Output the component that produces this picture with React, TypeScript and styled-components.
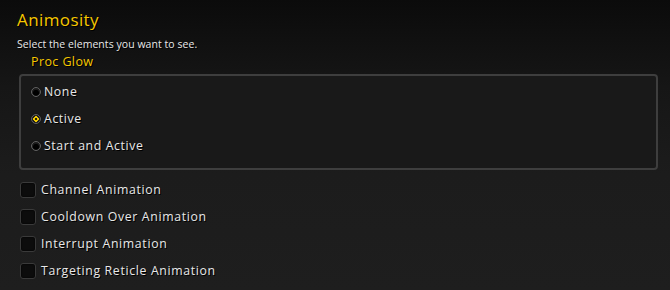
import styled, { createGlobalStyle } from "styled-components";

const GlobalStyle = createGlobalStyle`
  html, body {
    margin: 0;
    padding: 0;
    background: #1d1d1d;
  }
  #root {
    width: 670px;
    height: 290px;
  }
`;

const Page = styled.div`
  width: 670px;
  height: 290px;
  box-sizing: border-box;
  padding: 8px 12px 0 17px;
  background: linear-gradient(180deg, #0b0b0b 0%, #161616 30%, #1c1c1c 60%, #1e1e1e 100%);
  font-family: "Open Sans", "DejaVu Sans", sans-serif;
  color: #e8e8e8;
  text-shadow: 1px 1px 0 #000;
  overflow: hidden;
`;

const Title = styled.h1`
  margin: 0;
  font-size: 17px;
  font-weight: 400;
  letter-spacing: 0.4px;
  line-height: 24px;
  color: #f6c700;
`;

const Description = styled.div`
  margin-top: 5px;
  font-size: 10.5px;
  letter-spacing: 0.05px;
  line-height: 14px;
`;

const GroupLabel = styled.div`
  margin: 2px 0 0 14px;
  font-size: 12.5px;
  letter-spacing: 0.4px;
  line-height: 18px;
  color: #f6c700;
`;

const Group = styled.div`
  margin: 3px 0 0 2px;
  width: 639px;
  height: 96px;
  box-sizing: border-box;
  padding: 2px 0 0 10px;
  border: 2px solid #3e3e3e;
  border-radius: 4px;
  background: #191919;
  display: flex;
  flex-direction: column;
`;

const OptionRow = styled.label`
  height: 27px;
  display: flex;
  align-items: center;
  gap: 3px;
  font-size: 12.3px;
  letter-spacing: 0.6px;
`;

const Radio = styled.span<{ $checked?: boolean }>`
  width: 10px;
  height: 10px;
  box-sizing: border-box;
  border-radius: 50%;
  border: 1.5px solid #626262;
  background: ${(p) =>
    p.$checked
      ? "radial-gradient(circle, #2a2400 0 1.2px, #f0c800 1.3px 2.6px, #1e1e1e 2.7px)"
      : "radial-gradient(circle at 50% 60%, #000 0 2.6px, #1a1a1a 3.2px)"};
  box-shadow: 0 0 1px #000;
`;

const Checks = styled.div`
  margin-top: 6px;
  display: flex;
  flex-direction: column;
`;

const CheckRow = styled.label`
  height: 27px;
  display: flex;
  align-items: center;
  gap: 5px;
  padding-left: 3px;
  font-size: 12.3px;
  letter-spacing: 0.65px;
`;

const Box = styled.span`
  width: 16px;
  height: 16px;
  box-sizing: border-box;
  border-radius: 3px;
  border: 1px solid #3a3a3a;
  background: #0c0c0c;
  box-shadow: inset 0 0 2px #000;
`;

const procOptions = [
  { label: "None", checked: false },
  { label: "Active", checked: true },
  { label: "Start and Active", checked: false },
];

const animations = [
  "Channel Animation",
  "Cooldown Over Animation",
  "Interrupt Animation",
  "Targeting Reticle Animation",
];

export default function App() {
  return (
    <>
      <GlobalStyle />
      <Page>
        <Title>Animosity</Title>
        <Description>Select the elements you want to see.</Description>
        <GroupLabel>Proc Glow</GroupLabel>
        <Group>
          {procOptions.map((o) => (
            <OptionRow key={o.label}>
              <Radio $checked={o.checked} />
              {o.label}
            </OptionRow>
          ))}
        </Group>
        <Checks>
          {animations.map((a) => (
            <CheckRow key={a}>
              <Box />
              {a}
            </CheckRow>
          ))}
        </Checks>
      </Page>
    </>
  );
}
